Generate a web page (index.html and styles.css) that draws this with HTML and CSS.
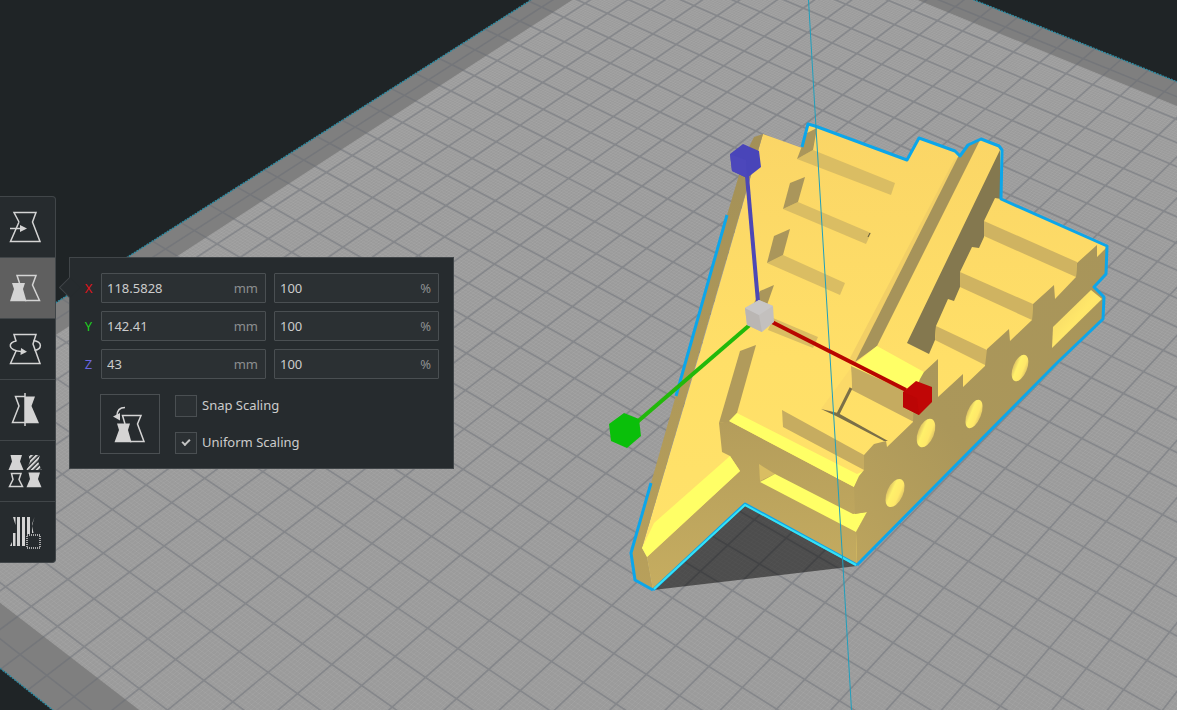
FILE: index.html
```html
<!DOCTYPE html>
<html lang="en">
<head>
    <meta charset="UTF-8">
    <meta name="viewport" content="width=device-width, initial-scale=1.0">
    <title>Scale</title>
    <link rel="stylesheet" href="styles.css">
</head>
<body>
    <!-- 3D view -->
    <svg class="scene" viewBox="0 0 1177 710" preserveAspectRatio="xMidYMid slice" aria-hidden="true">
        <defs>
            <linearGradient id="top-face" x1="0" y1="0" x2="0" y2="1">
                <stop offset="0" stop-color="#fad566"/>
                <stop offset="0.5" stop-color="#ffdf68"/>
                <stop offset="1" stop-color="#ffe36a"/>
            </linearGradient>
            <linearGradient id="side-face" x1="1" y1="0" x2="0" y2="1">
                <stop offset="0" stop-color="#a8955a"/>
                <stop offset="0.6" stop-color="#ab975a"/>
                <stop offset="1" stop-color="#bca45d"/>
            </linearGradient>
            <linearGradient id="left-face" x1="0" y1="0" x2="0" y2="1">
                <stop offset="0" stop-color="#a39057"/>
                <stop offset="1" stop-color="#b8a05b"/>
            </linearGradient>
            <linearGradient id="front-face" x1="0" y1="0" x2="0" y2="1">
                <stop offset="0" stop-color="#b49d5b"/>
                <stop offset="1" stop-color="#c6ad60"/>
            </linearGradient>
            <linearGradient id="hole" x1="0" y1="0" x2="1" y2="0">
                <stop offset="0" stop-color="#dcc164"/>
                <stop offset="0.3" stop-color="#fff06a"/>
                <stop offset="0.75" stop-color="#ffe869"/>
                <stop offset="1" stop-color="#e2c765"/>
            </linearGradient>
            <linearGradient id="pocket" x1="0" y1="0" x2="1" y2="1">
                <stop offset="0" stop-color="#efd064"/>
                <stop offset="0.5" stop-color="#ffe76a"/>
                <stop offset="1" stop-color="#f5d866"/>
            </linearGradient>
        </defs>

        <!-- Build plate -->
        <path id="plate" class="plate"/>
        <path id="plate-inner" class="plate-inner"/>
        <path id="grid-minor" class="grid-minor"/>
        <path id="grid-major" class="grid-major"/>
        <polygon class="shadow" points="653,590 745,505 857,566"/>

        <!-- Model -->
        <polygon fill="url(#top-face)" points="763,134 802,148 808,124 907,160 919,138 955,151 960,155 968,145 981,139 999,146 1003,150 1001,199 1107,246 1106,274 1094,287 1104,297 1103,319 857,565 745,504 653,590 647,557 642,548 700,352 740,214"/>
        <polygon fill="url(#left-face)" points="763,134 754,137 745,155 727,215 676,395 651,483 631,553 636,580 653,590 647,557 642,548"/>
        <polygon fill="url(#front-face)" points="719,423 729,421 854,487 865,470 870,510 867,512 856,532 857,565 745,504 653,590 647,557 740,471 730,456 722,452"/>
        <polygon fill="#ffff66" points="730,456 740,471 647,557 642,548 654,523"/>
        <polygon fill="#b19b5b" points="740,351 756,345 737,413 729,422 719,423"/>
        <polygon fill="#ffff66" points="729,421 737,413 857,474 866,470 858,478 854,487"/>
        <polygon fill="#d9bd62" points="759,464 775,474 760,481"/>
        <polygon fill="#ffff66" points="760,482 775,474 853,514 867,512 856,532"/>
        <polygon fill="#c6ac60" points="782,410 864,455 864,470 783,427"/>

        <!-- Slots in the top face -->
        <g fill="#dabd63">
            <polygon points="797,159 813,150 895,183 891,195"/>
            <polygon points="783,209 798,202 871,233 866,244"/>
            <polygon points="767,263 783,255 845,283 840,295"/>
            <polygon points="768,330 773,318 818,337 813,348"/>
        </g>
        <g fill="#aa965b">
            <polygon points="797,159 807,133 817,128 813,150"/>
            <polygon points="783,209 790,183 805,177 798,202"/>
            <polygon points="767,263 774,236 790,229 783,255"/>
            <polygon points="753,305 760,291 774,285 767,305"/>
        </g>
        <path stroke="#5d5537" d="M870 233l-2 4"/>

        <!-- Ridge -->
        <polygon fill="#f2cf66" points="958,157 954,160 850,358 855,362"/>
        <polygon fill="#a6935a" points="958,157 967,146 980,140 877,346 855,362"/>
        <polygon fill="#84784f" points="1000,150 1001,199 995,198 984,221 984,237 979,248 972,247 960,272 960,287 954,301 948,299 936,326 935,340 929,354 907,343"/>
        <polygon fill="#ffff66" points="877,346 924,372 919,381 914,395 852,366"/>
        <polygon fill="#c5ab60" points="851,366 914,395 914,422 852,390"/>
        <polygon fill="#fbd968" points="851,368 852,389 838,414 821,409"/>
        <path stroke="#7b6f48" stroke-width="3" d="M851 388L838 414"/>
        <polygon fill="#7b6f48" points="821,409 838,413 888,441 884,441 836,416"/>

        <!-- Stair risers -->
        <g fill="#cfb361">
            <polygon points="984,221 984,236 1076,277 1077,262"/>
            <polygon points="960,272 960,287 1032,320 1033,304"/>
            <polygon points="936,326 935,340 987,366 987,350"/>
        </g>

        <!-- Right side -->
        <polygon fill="url(#side-face)" points="857,565 856,532 867,512 855,514 854,487 859,476 864,470 864,455 874,444 886,441 887,447 913,422 914,395 920,379 924,372 938,359 938,397 963,374 963,387 985,366 987,349 1009,329 1010,341 1032,320 1033,304 1054,285 1055,299 1076,277 1077,263 1097,245 1097,257 1107,247 1106,274 1094,287 1104,297 1103,319"/>
        <polygon fill="url(#pocket)" points="1091,290 1102,299 1052,348 1053,327"/>
        <g fill="url(#hole)">
            <ellipse cx="926" cy="433" rx="8" ry="15" transform="rotate(22 926 433)"/>
            <ellipse cx="974" cy="414" rx="7" ry="15" transform="rotate(22 974 414)"/>
            <ellipse cx="1020" cy="368" rx="7" ry="14" transform="rotate(22 1020 368)"/>
            <ellipse cx="895" cy="493" rx="8" ry="15" transform="rotate(24 895 493)"/>
        </g>

        <!-- Selection outline -->
        <g class="outline">
            <path d="M802 147L808 124L815 126L907 160L919 138L955 151L960 156L968 145L981 139L999 146L1002 150L1001 199L1107 246L1106 274L1094 287L1104 297L1103 319L1058 362L857 565"/>
            <path d="M727 215L676 396"/>
            <path d="M651 483L631 553L635 580L653 590"/>
        </g>
        <path class="outline" d="M653 590L745 504L857 565"/>
        <path class="outline-bright" d="M654 589L745 505L856 565"/>

        <!-- Centre line -->
        <path class="centre-line" d="M808.500 0L816 128L829 340L843 566L851.500 710"/>

        <!-- Scale handles -->
        <path stroke="#4d48b5" stroke-width="4" d="M747 176L758 302"/>
        <path stroke="#22b90a" stroke-width="4" d="M752 323L636 423"/>
        <path stroke="#b80600" stroke-width="4" d="M770 321L906 390"/>
        <polygon fill="#4945b9" points="743,144 759,151 761,167 747,178 732,171 730,154"/>
        <polygon fill="#4c47bb" points="730,154 746,160 747,178 732,171"/>
        <polygon fill="#c3c0be" points="759,300 773,306 774,322 762,332 747,325 745,308"/>
        <polygon fill="#bab6b3" points="745,308 759,315 762,332 747,325"/>
        <polygon fill="#c8c6c6" points="759,300 773,306 759,315 745,308"/>
        <polygon fill="#0abf0a" points="624,413 639,419 641,436 627,448 611,441 609,424"/>
        <polygon fill="#c00606" points="916,381 932,387 932,402 919,415 903,407 903,392"/>
        <polygon fill="#bb0505" points="903,392 917,398 919,415 903,407"/>
    </svg>

    <main class="workspace">
        <!-- Tools -->
        <nav class="toolbar" aria-label="Tools">
            <button type="button" class="tool" aria-label="Move">
                <svg viewBox="0 0 55 60">
                    <path class="line" d="M19 25L14 15.500H36L32.500 25L40 44.500H10.500L19 25"/>
                    <path class="line" d="M10 31.500H21"/>
                    <path class="solid" d="M20 28L27 31.500L20 35z"/>
                </svg>
            </button>
            <button type="button" class="tool active" aria-label="Scale">
                <svg viewBox="0 0 55 60">
                    <path class="line" d="M19.500 25L17 17.500H36L32.500 27L39.500 42.500H25"/>
                    <path class="solid" d="M12 25H25L23 31L26.500 43.300H10L14 31z"/>
                </svg>
            </button>
            <button type="button" class="tool" aria-label="Rotate">
                <svg viewBox="0 0 55 60">
                    <path class="line" d="M16 22L14 15.500H36L33 25L40 44.500H10.500L16.500 31"/>
                    <path class="line" d="M16.500 22C8 23 7 31 21 32.500M33.500 21.500C43 23 42 30 34.500 31.500"/>
                    <path class="solid" d="M21 29L27 32.700L20.500 36z"/>
                </svg>
            </button>
            <button type="button" class="tool" aria-label="Mirror">
                <svg viewBox="0 0 55 60">
                    <path class="line" d="M25 16.500H15.500L19 26L12.500 42.500H25M25 13V46"/>
                    <path class="solid" d="M25 16.500H35L31.500 26L39 43.300H25z"/>
                </svg>
            </button>
            <button type="button" class="tool" aria-label="Per Model Settings">
                <svg viewBox="0 0 55 60">
                    <defs>
                        <pattern id="hatch" width="3.500" height="3.500" patternUnits="userSpaceOnUse" patternTransform="rotate(45)">
                            <rect width="2" height="3.500" fill="#d4d4d4"/>
                        </pattern>
                    </defs>
                    <path class="solid" d="M10.500 14H22L20 20.500L23.500 29H8.500L12 20.500z"/>
                    <path fill="url(#hatch)" d="M28.500 14H40L38 20.500L41.500 29H26.500L30 20.500z"/>
                    <path class="line" d="M11.500 32.500H21L19 38.500L22.500 45.500H9.500L13 38.500z"/>
                    <path class="solid" d="M28.500 31.500H40L38 38L41.500 46.300H26.500L30 38z"/>
                </svg>
            </button>
            <button type="button" class="tool" aria-label="Support Blocker">
                <svg viewBox="0 0 55 60">
                    <path class="solid" d="M13 15H15.500V23zM17 15H20V44H17zM22 15H25V44H22zM27 15H30V32H27zM34.500 15L32 22V31H33.500L32 24zM13 31H15.500V44H13zM10 44L12 40V44z"/>
                    <rect class="line dotted" x="27" y="33" width="13" height="13"/>
                </svg>
            </button>
        </nav>

        <!-- Scale panel -->
        <form class="panel">
            <div class="axes">
                <label class="axis axis-x" for="size-x">X</label>
                <div class="field"><input type="text" id="size-x" value="118.5828"><span class="unit">mm</span></div>
                <div class="field"><input type="text" aria-label="X percent" value="100"><span class="unit">%</span></div>

                <label class="axis axis-y" for="size-y">Y</label>
                <div class="field"><input type="text" id="size-y" value="142.41"><span class="unit">mm</span></div>
                <div class="field"><input type="text" aria-label="Y percent" value="100"><span class="unit">%</span></div>

                <label class="axis axis-z" for="size-z">Z</label>
                <div class="field"><input type="text" id="size-z" value="43"><span class="unit">mm</span></div>
                <div class="field"><input type="text" aria-label="Z percent" value="100"><span class="unit">%</span></div>
            </div>

            <div class="options">
                <button type="button" class="reset" aria-label="Reset">
                    <svg viewBox="0 0 58 58">
                        <path class="line" d="M24 29L21.500 20.500H40L36.500 29L43 46.500H29"/>
                        <path class="solid" d="M16 28.500H29L27 35L30.500 47.300H13.500L18 35z"/>
                        <path class="line" d="M24 12.500C19 12.500 16 15 16 21"/>
                        <path class="solid" d="M12 21.500L19 18V25.500z"/>
                    </svg>
                </button>
                <div class="checks">
                    <label class="check"><input type="checkbox" id="snap">Snap Scaling</label>
                    <label class="check"><input type="checkbox" id="uniform" checked>Uniform Scaling</label>
                </div>
            </div>
        </form>
    </main>

    <script src="scene.js"></script>
</body>
</html>
```
FILE: styles.css
```css
body {
    margin: 0;
    min-height: 100vh;
    background-color: #1f2426;
    color: #cccccc;
    font-family: "Noto Sans", sans-serif;
    font-size: 13px;
    position: relative;
    overflow: hidden;
}

/* 3D view behind the controls */
.scene {
    position: absolute;
    top: 0;
    left: 0;
    width: 100%;
    height: 100%;
}
.scene path {
    fill: none;
}
.scene .plate {
    fill: #7f7f7f;
    stroke: #2f8ca3;
    stroke-width: 1.5px;
    stroke-dasharray: 2 1;
}
.scene .plate-inner {
    fill: #9b9b9b;
}
.grid-minor {
    stroke: #b8b8b8;
    stroke-opacity: 0.2;
    stroke-width: 1px;
}
.grid-major {
    stroke: #6a6e75;
    stroke-opacity: 0.5;
    stroke-width: 1.5px;
}
.shadow {
    fill: #000000;
    fill-opacity: 0.5;
}
.outline {
    stroke: #0ca6ea;
    stroke-width: 3px;
    stroke-linejoin: round;
}
.outline-bright {
    stroke: #35e2f7;
    stroke-width: 2px;
}
.centre-line {
    stroke: #1f9fbd;
    stroke-width: 1px;
}

/* Layout */
.workspace {
    position: relative;
    display: flex;
    align-items: flex-start;
    gap: 13px;
    padding-top: 196px;
}

/* Toolbar */
.toolbar {
    display: flex;
    flex-direction: column;
    gap: 1px;
    background-color: #414649;
    border: 1px solid #414649;
    border-left: none;
    border-radius: 0 4px 4px 0;
    overflow: hidden;
}
.tool {
    width: 55px;
    height: 60px;
    padding: 0;
    border: none;
    background-color: #262b2e;
    cursor: pointer;
}
.tool:hover,
.tool.active {
    background-color: #5f5f5f;
}
.tool svg,
.reset svg {
    display: block;
    width: 100%;
    height: 100%;
}
.line {
    fill: none;
    stroke: #d4d4d4;
    stroke-width: 1.5px;
}
.solid {
    fill: #d4d4d4;
}
.dotted {
    stroke-dasharray: 1 1;
}

/* Scale panel */
.panel {
    position: relative;
    margin-top: 61px;
    padding: 15px 14px 14px 14px;
    background-color: #262b2e;
    border: 1px solid #414649;
}
.panel::before {
    content: "";
    position: absolute;
    left: -8px;
    top: 22px;
    width: 14px;
    height: 14px;
    background-color: #262b2e;
    border: 1px solid #414649;
    border-top: none;
    border-right: none;
    transform: rotate(45deg);
}
.axes {
    display: grid;
    grid-template-columns: 9px 165px 165px;
    gap: 8px;
    align-items: center;
}
.axes .axis {
    text-align: center;
}
.axis-x {
    color: #e0141c;
}
.axis-y {
    color: #1fd11f;
}
.axis-z {
    color: #6a66e0;
}
.field {
    display: flex;
    align-items: center;
    box-sizing: border-box;
    height: 30px;
    padding: 0 7px 0 5px;
    background-color: #2b3033;
    border: 1px solid #4a4f52;
    border-radius: 1px;
}
.field input {
    flex: 1;
    min-width: 0;
    padding: 0;
    border: none;
    outline: none;
    background: none;
    color: #cccccc;
    font: inherit;
}
.unit {
    color: #8c8e8f;
}
.options {
    display: flex;
    align-items: center;
    gap: 15px;
    margin-top: 15px;
    padding-left: 16px;
}
.reset {
    box-sizing: border-box;
    width: 60px;
    height: 60px;
    padding: 0;
    background-color: #262b2e;
    border: 1px solid #4a4f52;
    cursor: pointer;
}
.checks {
    display: flex;
    flex-direction: column;
    gap: 15px;
}
.check {
    display: flex;
    align-items: flex-start;
    gap: 5px;
    line-height: 20px;
}
.check input {
    appearance: none;
    display: grid;
    place-items: center;
    width: 22px;
    height: 22px;
    margin: 0;
    background-color: #2b3033;
    border: 1px solid #4a4f52;
}
.check input:checked::before {
    content: "";
    width: 6px;
    height: 3px;
    margin-bottom: 3px;
    border-left: 2px solid #c4c4c4;
    border-bottom: 2px solid #c4c4c4;
    transform: rotate(-45deg);
}
```
FILE: scene.js
```js
// Camera projection of the build plate, one unit per grid cell
function project(u, v) {
    const w = 0.0132018 * u - 0.00954972 * v + 1;
    const x = (37.6958 * u + 25.8852 * v + 57.5685) / w;
    const y = (-19.551 * u + 14.1652 * v + 626.314) / w;
    return x.toFixed(1) + ' ' + y.toFixed(1);
}

const plate = { left: -1.5, right: 33.68, back: -9.58, front: 28 };
const inner = { left: -0.37, right: 32.59, back: -8.48, front: 28 };

function area(r) {
    return 'M' + project(r.left, r.back) + 'L' + project(r.right, r.back) +
        'L' + project(r.right, r.front) + 'L' + project(r.left, r.front) + 'Z';
}

function grid(r, step) {
    let d = '';
    for (let u = Math.ceil(r.left / step) * step; u < r.right; u += step) {
        d += 'M' + project(u, r.back) + 'L' + project(u, r.front);
    }
    for (let v = Math.ceil(r.back / step) * step; v < r.front; v += step) {
        d += 'M' + project(r.left, v) + 'L' + project(r.right, v);
    }
    return d;
}

document.getElementById('plate').setAttribute('d', area(plate));
document.getElementById('plate-inner').setAttribute('d', area(inner));
document.getElementById('grid-minor').setAttribute('d', grid(inner, 0.1));
document.getElementById('grid-major').setAttribute('d', grid(plate, 1));
```
